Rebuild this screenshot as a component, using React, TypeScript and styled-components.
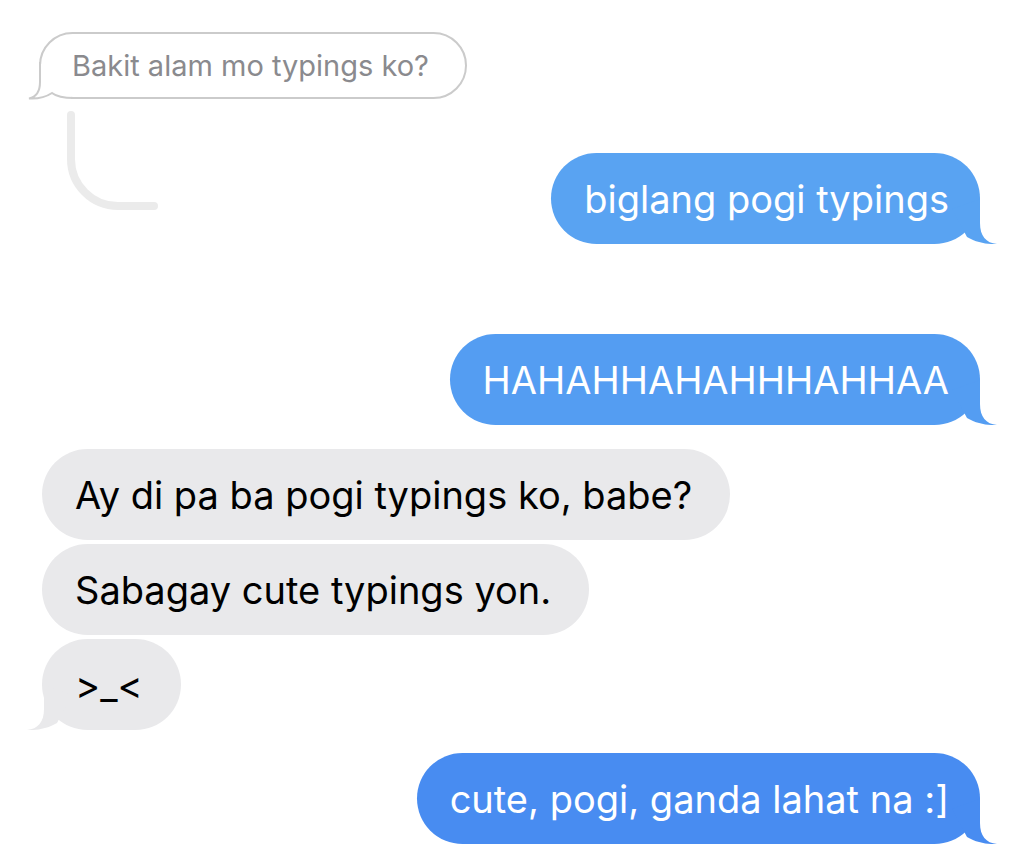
import React from "react";
import styled, { createGlobalStyle, css } from "styled-components";

const GlobalStyle = createGlobalStyle`
  html, body { margin: 0; padding: 0; background: #ffffff; }
  body { font-family: Inter, "Liberation Sans", sans-serif; }
`;

const Page = styled.main`
  width: 1024px;
  height: 866px;
  overflow: hidden;
  box-sizing: border-box;
  padding-top: 32px;
  display: flex;
  flex-direction: column;
  background: #ffffff;
`;

const ReplyBubble = styled.div`
  position: relative;
  align-self: flex-start;
  margin-left: 39px;
  height: 67px;
  box-sizing: border-box;
  padding: 0 36px 0 31px;
  display: flex;
  align-items: center;
  border: 2px solid #cbcbcb;
  border-radius: 34px;
  font-size: 29px;
  color: #8a8a8e;
  white-space: nowrap;
`;

const ReplyTailSvg = styled.svg`
  position: absolute;
  left: -14px;
  bottom: -3px;
  width: 48px;
  height: 40px;
  overflow: visible;
`;

const ThreadRow = styled.div`
  display: flex;
  justify-content: space-between;
  align-items: flex-start;
  margin-top: 12px;
`;

const Connector = styled.svg`
  margin-left: 67px;
  width: 100px;
  height: 100px;
  flex: none;
`;

type Side = "sent" | "received";

const Bubble = styled.div<{ $side: Side; $tone?: string; $top: number }>`
  position: relative;
  flex: none;
  height: 91px;
  box-sizing: border-box;
  display: flex;
  align-items: center;
  border-radius: 46px;
  white-space: nowrap;
  font-size: 38px;
  margin-top: ${(p) => p.$top}px;
  ${(p) =>
    p.$side === "sent"
      ? css`
          align-self: flex-end;
          margin-right: 44px;
          padding: 0 31px 0 33px;
          background: ${p.$tone};
          color: #ffffff;
        `
      : css`
          align-self: flex-start;
          margin-left: 42px;
          padding: 0 38px 0 33px;
          background: #e9e9eb;
          color: #000000;
        `}
`;

const TailSvg = styled.svg<{ $side: Side }>`
  position: absolute;
  bottom: 0;
  width: 50px;
  height: 50px;
  ${(p) =>
    p.$side === "sent"
      ? css`
          right: -17px;
        `
      : css`
          left: -15px;
          transform: scaleX(-1);
        `}
`;

const Tail = ({ side, color }: { side: Side; color: string }) => (
  <TailSvg $side={side} viewBox="0 0 50 50">
    <path
      d="M33 5 L33 29 C33 42 39 49 50 50 C42 50.5 30 49 20 43 L5 15 Z"
      fill={color}
    />
  </TailSvg>
);

export default function App() {
  return (
    <>
      <GlobalStyle />
      <Page>
        <ReplyBubble>
          Bakit alam mo typings ko?
          <ReplyTailSvg viewBox="0 0 48 40">
            <rect x="9" y="4" width="35" height="37" fill="#ffffff" />
            <path
              d="M13 2 L13 22 C13 32 9 37 2 38.5 C11 39 19 37 25 33 C30 37 36 38 47 38"
              fill="none"
              stroke="#cbcbcb"
              strokeWidth="2"
            />
          </ReplyTailSvg>
        </ReplyBubble>

        <ThreadRow>
          <Connector viewBox="0 0 100 100">
            <path
              d="M4 4 L4 48 A47 47 0 0 0 51 95 L87 95"
              fill="none"
              stroke="#ebebeb"
              strokeWidth="8"
              strokeLinecap="round"
            />
          </Connector>
          <Bubble $side="sent" $tone="#59a3f2" $top={42}>
            biglang pogi typings
            <Tail side="sent" color="#59a3f2" />
          </Bubble>
        </ThreadRow>

        <Bubble $side="sent" $tone="#549df2" $top={90}>
          HAHAHHAHAHHHAHHAA
          <Tail side="sent" color="#549df2" />
        </Bubble>

        <Bubble $side="received" $top={24}>
          Ay di pa ba pogi typings ko, babe?
        </Bubble>
        <Bubble $side="received" $top={4}>
          Sabagay cute typings yon.
        </Bubble>
        <Bubble $side="received" $top={4}>
          &gt;_&lt;
          <Tail side="received" color="#e9e9eb" />
        </Bubble>

        <Bubble $side="sent" $tone="#488cf1" $top={23}>
          cute, pogi, ganda lahat na :]
          <Tail side="sent" color="#488cf1" />
        </Bubble>
      </Page>
    </>
  );
}
